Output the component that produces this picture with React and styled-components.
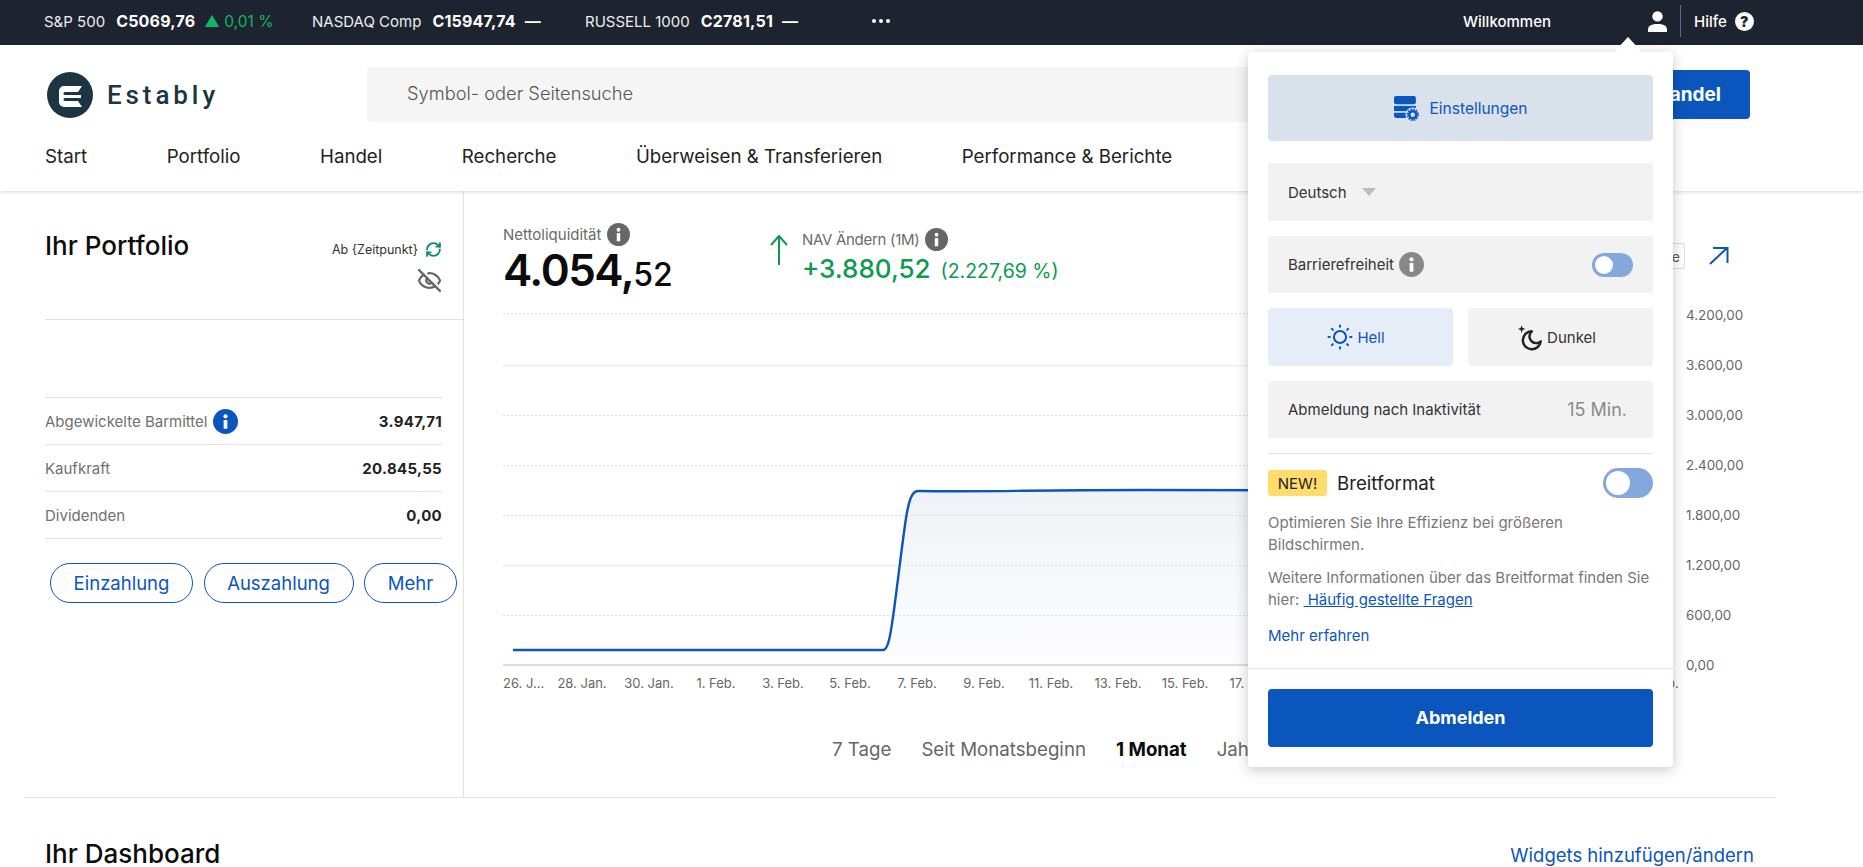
import React from 'react';
import styled, { createGlobalStyle } from 'styled-components';
import { EyeOff, RefreshCw } from 'lucide-react';

const BLUE = '#0b56bd';
const GREEN = '#0a9b50';
const FONT = 'Inter, Roboto, sans-serif';

const GlobalStyle = createGlobalStyle`
  html, body {
    margin: 0;
    height: 100%;
    overflow: hidden;
    background: #fff;
  }
  body {
    font-family: ${FONT};
    color: #111;
  }
  * { box-sizing: border-box; }
`;

const Page = styled.div`
  position: relative;
  width: 1863px;
  height: 867px;
  overflow: hidden;
`;

/* top ticker bar */
const TopBar = styled.div`
  height: 45px;
  background: #1e2330;
  color: #fff;
  display: flex;
  align-items: center;
  padding: 0 0 3px 44px;
  font-size: 15px;
`;

const Ticker = styled.div`
  width: ${(p) => p.$w}px;
  display: flex;
  align-items: center;
  white-space: nowrap;
`;

const TickerName = styled.span`
  color: #eee;
  margin-right: 11px;
`;

const TickerValue = styled.span`
  font-size: 16px;
  font-weight: 700;
  letter-spacing: 0.2px;
  margin-right: 9px;
`;

const TickerUp = styled.span`
  color: #0fb765;
  font-size: 15.5px;
`;

const Dots = styled.div`
  display: flex;
  gap: 3px;
  margin-right: 573px;
  span {
    width: 4px;
    height: 4px;
    border-radius: 50%;
    background: #fff;
  }
`;

const Welcome = styled.div`
  font-weight: 500;
  width: 185px;
`;

const BarDivider = styled.div`
  width: 1px;
  height: 32px;
  background: #667;
  margin: 0 13px 0 13px;
`;

const HelpLabel = styled.span`
  font-weight: 500;
  margin-right: 8px;
`;

const HelpDot = styled.span`
  width: 19px;
  height: 19px;
  border-radius: 50%;
  background: #fff;
  color: #1e2330;
  font-size: 14px;
  font-weight: 900;
  display: flex;
  align-items: center;
  justify-content: center;
`;

/* header */
const Header = styled.header`
  height: 146px;
  background: #fff;
  box-shadow: 0 1px 4px rgba(0, 0, 0, 0.16);
  position: relative;
`;

const HeaderTop = styled.div`
  display: flex;
  align-items: center;
  height: 77px;
  padding: 22px 113px 0 47px;
`;

const Logo = styled.div`
  width: 320px;
  display: flex;
  align-items: center;
  gap: 14px;
`;

const LogoText = styled.span`
  font-family: Roboto, sans-serif;
  font-weight: 500;
  font-size: 26px;
  letter-spacing: 3.9px;
  color: #1d3542;
`;

const Search = styled.div`
  flex: 1;
  height: 55px;
  background: #f5f5f5;
  border-radius: 4px;
  display: flex;
  align-items: center;
  padding: 0 0 3px 40px;
  font-size: 18.3px;
  font-weight: 300;
  color: #555;
`;

const TradeButton = styled.button`
  width: 130px;
  height: 49px;
  background: ${BLUE};
  color: #fff;
  border: 0;
  border-radius: 4px;
  font-family: ${FONT};
  font-size: 19px;
  font-weight: 700;
  text-align: right;
  padding: 0 29px 1px 0;
`;

const Nav = styled.nav`
  display: flex;
  gap: 79.5px;
  padding: 23px 0 0 45px;
  font-size: 18.7px;
  color: #222;
`;

/* main */
const Main = styled.main`
  display: flex;
  height: 607px;
  margin: 0 88px 0 25px;
  border-bottom: 1px solid #e2e2e2;
`;

const Side = styled.aside`
  width: 439px;
  padding-left: 20px;
  border-right: 1px solid #e2e2e2;
`;

const SideHead = styled.div`
  height: 129px;
  display: flex;
  justify-content: space-between;
  padding: 37px 21px 0 0;
  border-bottom: 1px solid #e2e2e2;
`;

const SideTitle = styled.h2`
  margin: 0;
  font-size: 26px;
  font-weight: 500;
  line-height: 36px;
  color: #0c0c0c;
`;

const AsOf = styled.div`
  display: flex;
  flex-direction: column;
  align-items: flex-end;
  gap: 10px;
  padding-top: 13px;
  font-size: 12.5px;
  color: #333;
`;

const AsOfLine = styled.div`
  display: flex;
  align-items: center;
  gap: 7px;
`;

const Rows = styled.div`
  margin: 77px 21px 0 0;
  border-top: 1px solid #e2e2e2;
`;

const Row = styled.div`
  height: 47px;
  display: flex;
  align-items: center;
  justify-content: space-between;
  border-bottom: 1px solid #e2e2e2;
  font-size: 15px;
  color: #707070;
`;

const RowLabel = styled.span`
  display: flex;
  align-items: center;
  gap: 6px;
`;

const RowValue = styled.span`
  font-weight: 700;
  color: #222;
  letter-spacing: 0.3px;
  padding-top: 1px;
`;

const Actions = styled.div`
  display: flex;
  gap: 10.5px;
  margin: 24px 0 0 5px;
`;

const Pill = styled.button`
  width: ${(p) => p.$w}px;
  height: 40px;
  background: #fff;
  border: 1px solid ${BLUE};
  border-radius: 20px;
  color: ${BLUE};
  font-family: ${FONT};
  font-size: 18.5px;
  font-weight: 400;
`;

const Content = styled.section`
  flex: 1;
  min-width: 0;
  padding-left: 39px;
`;

const Stats = styled.div`
  height: 99px;
  display: flex;
  align-items: flex-start;
  padding: 31px 46px 0 0;
`;

const Stat = styled.div`
  width: 267px;
`;

const StatLabel = styled.div`
  display: flex;
  align-items: center;
  gap: 6px;
  height: 24px;
  font-size: 15px;
  color: #6b6b6b;
  letter-spacing: ${(p) => (p.$tight ? '-0.3px' : '0')};
`;

const BigNumber = styled.div`
  font-size: 44px;
  font-weight: 600;
  letter-spacing: -1.5px;
  line-height: 44px;
  margin-top: 2px;
  color: #0b0b0b;
  small {
    font-size: 32px;
    font-weight: 500;
    letter-spacing: 0;
  }
`;

const NavChange = styled.div`
  display: flex;
  margin-top: 5px;
  gap: 14px;
`;

const NavArrow = styled.svg`
  margin-top: 8px;
`;

const ChangeValue = styled.div`
  color: ${GREEN};
  font-size: 26px;
  font-weight: 500;
  line-height: 36px;
  small {
    font-size: 19.5px;
    font-weight: 400;
    margin-left: 10px;
  }
`;

const ViewTools = styled.div`
  margin-left: auto;
  display: flex;
  align-items: center;
  gap: 24px;
  padding-top: 21px;
`;

const ViewButton = styled.div`
  width: 90px;
  height: 26px;
  border: 1px solid #ddd;
  border-radius: 3px;
  font-size: 14px;
  color: #555;
  display: flex;
  align-items: center;
  justify-content: flex-end;
  padding-right: 4px;
`;

const ChartRow = styled.div`
  display: flex;
  height: 378px;
`;

const ChartSvg = styled.svg`
  display: block;
  flex: none;
`;

const YAxis = styled.div`
  margin-left: 13px;
  font-size: 13.4px;
  color: #666;
`;

const YLabel = styled.div`
  height: 50px;
  line-height: 50px;
`;

const XAxis = styled.div`
  display: flex;
  margin-top: 3px;
  height: 24px;
  align-items: center;
  font-size: 13px;
  color: #666;
`;

const Tick = styled.div`
  flex: none;
  width: 67px;
  text-align: center;
  white-space: nowrap;
  &:first-child {
    width: 45.5px;
    text-align: left;
  }
`;

const Ranges = styled.div`
  display: flex;
  gap: 30px;
  margin: 43px 0 0 329px;
  font-size: 18.7px;
  color: #666;
`;

const Range = styled.span`
  color: ${(p) => (p.$active ? '#0b0b0b' : '#666')};
  font-weight: ${(p) => (p.$active ? 700 : 400)};
`;

const DashboardHead = styled.div`
  display: flex;
  justify-content: space-between;
  align-items: center;
  padding: 42px 109px 0 45px;
`;

const DashboardTitle = styled.h2`
  margin: 0;
  font-size: 26px;
  line-height: 27px;
  font-weight: 500;
  color: #0c0c0c;
`;

const DashboardLink = styled.a`
  font-size: 18.5px;
  margin-top: 3px;
  color: ${BLUE};
`;

/* user menu */
const Menu = styled.div`
  position: absolute;
  top: 52px;
  right: 190px;
  width: 425px;
  height: 715px;
  background: #fff;
  border-radius: 4px;
  box-shadow: 0 3px 14px rgba(0, 0, 0, 0.22);
  &::before {
    content: '';
    position: absolute;
    top: -15px;
    right: 31px;
    border-left: 14px solid transparent;
    border-right: 14px solid transparent;
    border-bottom: 15px solid #fff;
  }
`;

const MenuBody = styled.div`
  padding: 23px 20px 0;
  height: 617px;
  border-bottom: 1px solid #e2e2e2;
`;

const SettingsButton = styled.div`
  height: 66px;
  background: #d9e1eb;
  border-radius: 4px;
  color: ${BLUE};
  font-size: 15.5px;
  display: flex;
  align-items: center;
  justify-content: center;
  gap: 11px;
  margin-bottom: 22px;
`;

const MenuRow = styled.div`
  height: ${(p) => p.$h || 57}px;
  background: #f2f2f2;
  border-radius: 2px;
  display: flex;
  align-items: center;
  justify-content: space-between;
  padding: 0 20px;
  margin-bottom: 15px;
  font-size: 15px;
  color: #333;
`;

const RowGroup = styled.span`
  display: flex;
  align-items: center;
  gap: ${(p) => p.$gap || 5}px;
`;

const Caret = styled.i`
  width: 0;
  height: 0;
  border-left: 7px solid transparent;
  border-right: 7px solid transparent;
  border-top: 8px solid #bdbdbd;
`;

const Toggle = styled.span`
  width: ${(p) => p.$w}px;
  height: ${(p) => p.$h}px;
  border-radius: ${(p) => p.$h / 2}px;
  background: #84a8dc;
  padding: 3px;
  display: block;
  &::before {
    content: '';
    display: block;
    width: ${(p) => p.$h - 6}px;
    height: ${(p) => p.$h - 6}px;
    border-radius: 50%;
    background: #fff;
  }
`;

const ModeRow = styled.div`
  display: flex;
  gap: 15px;
  margin-bottom: 15px;
`;

const ModeButton = styled.div`
  flex: 1;
  height: 58px;
  border-radius: 4px;
  background: ${(p) => (p.$active ? '#e6edf6' : '#f2f2f2')};
  color: ${(p) => (p.$active ? BLUE : '#333')};
  font-size: 15px;
  display: flex;
  align-items: center;
  justify-content: center;
  gap: 4px;
  padding-right: 9px;
`;

const Timeout = styled.span`
  font-size: 18px;
  color: #8a8a8a;
  margin-right: 6px;
`;

const MenuDivider = styled.div`
  height: 1px;
  background: #e2e2e2;
`;

const WideHead = styled.div`
  display: flex;
  align-items: center;
  margin-top: 14px;
  height: 30px;
`;

const NewBadge = styled.span`
  width: 59px;
  height: 26px;
  background: #ffdc6b;
  border-radius: 3px;
  font-size: 15px;
  color: #222;
  display: flex;
  align-items: center;
  justify-content: center;
  margin-right: 10px;
`;

const WideTitle = styled.span`
  font-size: 18.7px;
  color: #222;
  flex: 1;
`;

const Para = styled.p`
  margin: ${(p) => p.$mt}px 0 0;
  font-size: 15px;
  line-height: 22px;
  color: #777;
`;

const MenuLink = styled.a`
  color: ${BLUE};
  text-decoration: ${(p) => (p.$under ? 'underline' : 'none')};
`;

const MenuFooter = styled.div`
  padding: 20px;
`;

const LogoutButton = styled.button`
  width: 100%;
  height: 58px;
  background: ${BLUE};
  color: #fff;
  border: 0;
  border-radius: 4px;
  font-family: ${FONT};
  font-size: 18px;
  font-weight: 700;
  padding-bottom: 2px;
`;

const InfoIcon = ({ size = 23, color = '#666' }) => (
  <svg width={size} height={size} viewBox="0 0 24 24">
    <circle cx="12" cy="12" r="12" fill={color} />
    <circle cx="12" cy="7" r="2" fill="#fff" />
    <rect x="10.2" y="10.5" width="3.6" height="8.5" rx="0.6" fill="#fff" />
  </svg>
);

const LogoMark = () => (
  <svg width="46" height="46" viewBox="0 0 46 46">
    <circle cx="23" cy="23" r="23" fill="#1d3542" />
    <path
      d="M17 14H35L31 20H18a1.5 1.5 0 0 0 0 3H34V26H18a1.5 1.5 0 0 0 0 3H31L35 35H17a5 5 0 0 1-5-5V19a5 5 0 0 1 5-5z"
      fill="#fff"
    />
  </svg>
);

const UserIcon = () => (
  <svg width="19" height="21" viewBox="0 0 19 21" fill="#fff">
    <circle cx="9.5" cy="5.4" r="5.2" />
    <path d="M0 21v-2.6c0-3.6 4-5.4 9.5-5.4s9.5 1.8 9.5 5.4V21z" />
  </svg>
);

const SettingsIcon = () => (
  <svg width="25" height="25" viewBox="0 0 24 24">
    <rect x="0" y="0" width="21" height="8" rx="2" fill={BLUE} />
    <rect x="0" y="9.5" width="21" height="5" fill={BLUE} />
    <path d="M0 16h12v5H2a2 2 0 0 1-2-2z" fill={BLUE} />
    <circle cx="18" cy="18" r="7" fill="#d9e1eb" />
    <circle cx="18" cy="18" r="3.4" fill="none" stroke={BLUE} strokeWidth="2.4" />
    <circle cx="18" cy="18" r="5.2" fill="none" stroke={BLUE} strokeWidth="1.6" strokeDasharray="1.6 1.1" />
  </svg>
);

const SUN_RAYS = [0, 45, 90, 135, 180, 225, 270, 315];

const SunIcon = () => (
  <svg width="26" height="26" viewBox="0 0 24 24" fill="none" stroke={BLUE} strokeWidth="1.9" strokeLinecap="round">
    <circle cx="12" cy="12" r="5.6" />
    {SUN_RAYS.map((a) => (
      <line key={a} x1="12" y1="1.4" x2="12" y2="2.6" transform={`rotate(${a} 12 12)`} />
    ))}
  </svg>
);

const MoonIcon = () => (
  <svg width="27" height="27" viewBox="0 0 24 24">
    <path
      d="M14 6.5a8 8 0 1 0 8 9 5 5 0 0 1-8-9z"
      fill="none"
      stroke="#222"
      strokeWidth="2.2"
      strokeLinejoin="round"
    />
    <path d="M5 1l.9 2.6L8.5 4.5 5.9 5.4 5 8 4.1 5.4 1.5 4.5 4.1 3.6z" fill="#222" />
  </svg>
);

const RISE =
  'C386 360 388 340 391 320 C395 290 399 255 403 228 C406 210 409 201 415 201 C500 202 520 200 640 200 C800 200 1000 201 1170 201';

const GRID_Y = [23, 75, 125, 175, 225, 275, 325];
const Y_LABELS = ['4.200,00', '3.600,00', '3.000,00', '2.400,00', '1.800,00', '1.200,00', '600,00', '0,00'];
const X_LABELS = [
  '26. J...', '28. Jan.', '30. Jan.', '1. Feb.', '3. Feb.', '5. Feb.', '7. Feb.', '9. Feb.', '11. Feb.',
  '13. Feb.', '15. Feb.', '17. Feb.', '19. Feb.', '21. Feb.', '23. Feb.', '25. Feb.', '27. Feb.', '29. Feb.',
];

const Chart = () => (
  <ChartSvg width="1170" height="378" viewBox="0 0 1170 378">
    <defs>
      <linearGradient id="area" x1="0" y1="0" x2="0" y2="1">
        <stop offset="0" stopColor="#eff2f6" />
        <stop offset="1" stopColor="#fdfdfe" />
      </linearGradient>
    </defs>
    <path d={`M380 375 V360 ${RISE} V375 Z`} fill="url(#area)" />
    {GRID_Y.map((y) => (
      <line key={y} x1="0" x2="1170" y1={y + 0.5} y2={y + 0.5} stroke="#dedede" strokeDasharray="2 2" />
    ))}
    <line x1="0" x2="1170" y1="375" y2="375" stroke="#d5ddee" strokeWidth="2" />
    <path d={`M10 360 L380 360 ${RISE}`} fill="none" stroke={BLUE} strokeWidth="2.4" />
  </ChartSvg>
);

export default function App() {
  return (
    <Page>
      <GlobalStyle />
      <TopBar>
        <Ticker $w={268}>
          <TickerName>S&amp;P 500</TickerName>
          <TickerValue>C5069,76</TickerValue>
          <TickerUp>▲ 0,01 %</TickerUp>
        </Ticker>
        <Ticker $w={273}>
          <TickerName>NASDAQ Comp</TickerName>
          <TickerValue>C15947,74</TickerValue>
          <TickerValue>—</TickerValue>
        </Ticker>
        <Ticker $w={287}>
          <TickerName>RUSSELL 1000</TickerName>
          <TickerValue>C2781,51</TickerValue>
          <TickerValue>—</TickerValue>
        </Ticker>
        <Dots>
          <span />
          <span />
          <span />
        </Dots>
        <Welcome>Willkommen</Welcome>
        <UserIcon />
        <BarDivider />
        <HelpLabel>Hilfe</HelpLabel>
        <HelpDot>?</HelpDot>
      </TopBar>

      <Header>
        <HeaderTop>
          <Logo>
            <LogoMark />
            <LogoText>Estably</LogoText>
          </Logo>
          <Search>Symbol- oder Seitensuche</Search>
          <TradeButton>Handel</TradeButton>
        </HeaderTop>
        <Nav>
          <span>Start</span>
          <span>Portfolio</span>
          <span>Handel</span>
          <span>Recherche</span>
          <span>Überweisen &amp; Transferieren</span>
          <span>Performance &amp; Berichte</span>
        </Nav>
      </Header>

      <Main>
        <Side>
          <SideHead>
            <SideTitle>Ihr Portfolio</SideTitle>
            <AsOf>
              <AsOfLine>
                Ab {'{Zeitpunkt}'}
                <RefreshCw size={17} color="#0e8a6b" strokeWidth={2.6} />
              </AsOfLine>
              <EyeOff size={25} color="#666" strokeWidth={2.2} />
            </AsOf>
          </SideHead>
          <Rows>
            <Row>
              <RowLabel>
                Abgewickelte Barmittel <InfoIcon size={25} color={BLUE} />
              </RowLabel>
              <RowValue>3.947,71</RowValue>
            </Row>
            <Row>
              <RowLabel>Kaufkraft</RowLabel>
              <RowValue>20.845,55</RowValue>
            </Row>
            <Row>
              <RowLabel>Dividenden</RowLabel>
              <RowValue>0,00</RowValue>
            </Row>
          </Rows>
          <Actions>
            <Pill $w={143}>Einzahlung</Pill>
            <Pill $w={150}>Auszahlung</Pill>
            <Pill $w={93}>Mehr</Pill>
          </Actions>
        </Side>

        <Content>
          <Stats>
            <Stat>
              <StatLabel>
                Nettoliquidität <InfoIcon />
              </StatLabel>
              <BigNumber>
                4.054,<small>52</small>
              </BigNumber>
            </Stat>
            <NavChange>
              <NavArrow width="18" height="30" viewBox="0 0 18 30" fill="none" stroke={GREEN} strokeWidth="2">
                <path d="M9 30V1M1 10l8-9 8 9" />
              </NavArrow>
              <div>
                <StatLabel $tight>
                  NAV Ändern (1M) <InfoIcon />
                </StatLabel>
                <ChangeValue>
                  +3.880,52<small>(2.227,69 %)</small>
                </ChangeValue>
              </div>
            </NavChange>
            <ViewTools>
              <ViewButton>Werte</ViewButton>
              <svg width="20" height="18" viewBox="0 0 20 18" fill="none" stroke={BLUE} strokeWidth="2">
                <path d="M1 17L18 1M4 1h14.5v15" />
              </svg>
            </ViewTools>
          </Stats>
          <ChartRow>
            <Chart />
            <YAxis>
              {Y_LABELS.map((l) => (
                <YLabel key={l}>{l}</YLabel>
              ))}
            </YAxis>
          </ChartRow>
          <XAxis>
            {X_LABELS.map((l) => (
              <Tick key={l}>{l}</Tick>
            ))}
          </XAxis>
          <Ranges>
            <Range>7 Tage</Range>
            <Range>Seit Monatsbeginn</Range>
            <Range $active>1 Monat</Range>
            <Range>Jahr</Range>
          </Ranges>
        </Content>
      </Main>

      <DashboardHead>
        <DashboardTitle>Ihr Dashboard</DashboardTitle>
        <DashboardLink>Widgets hinzufügen/ändern</DashboardLink>
      </DashboardHead>

      <Menu>
        <MenuBody>
          <SettingsButton>
            <SettingsIcon />
            Einstellungen
          </SettingsButton>
          <MenuRow $h={58}>
            <RowGroup $gap={15}>
              Deutsch <Caret />
            </RowGroup>
          </MenuRow>
          <MenuRow>
            <RowGroup>
              Barrierefreiheit <InfoIcon size={25} color="#888" />
            </RowGroup>
            <Toggle $w={41} $h={24} />
          </MenuRow>
          <ModeRow>
            <ModeButton $active>
              <SunIcon />
              Hell
            </ModeButton>
            <ModeButton>
              <MoonIcon />
              Dunkel
            </ModeButton>
          </ModeRow>
          <MenuRow>
            <span>Abmeldung nach Inaktivität</span>
            <Timeout>15 Min.</Timeout>
          </MenuRow>
          <MenuDivider />
          <WideHead>
            <NewBadge>NEW!</NewBadge>
            <WideTitle>Breitformat</WideTitle>
            <Toggle $w={50} $h={30} />
          </WideHead>
          <Para $mt={14}>Optimieren Sie Ihre Effizienz bei größeren Bildschirmen.</Para>
          <Para $mt={11}>
            Weitere Informationen über das Breitformat finden Sie hier:{' '}
            <MenuLink $under>&nbsp;Häufig gestellte Fragen</MenuLink>
          </Para>
          <Para $mt={14}>
            <MenuLink>Mehr erfahren</MenuLink>
          </Para>
        </MenuBody>
        <MenuFooter>
          <LogoutButton>Abmelden</LogoutButton>
        </MenuFooter>
      </Menu>
    </Page>
  );
}
